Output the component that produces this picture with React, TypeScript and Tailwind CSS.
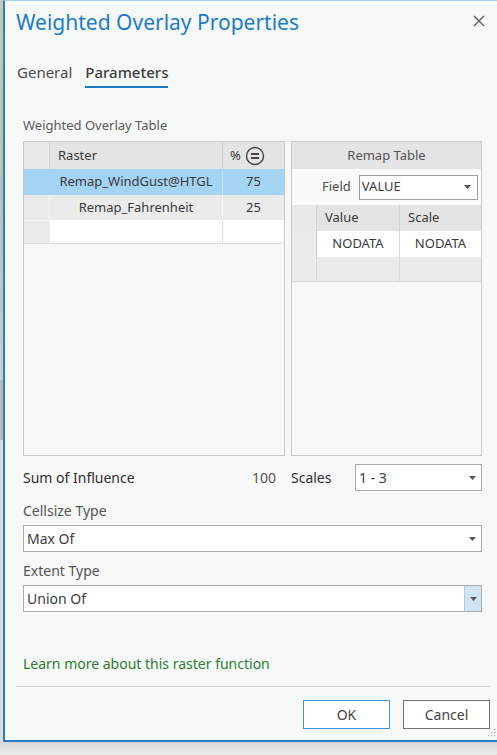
import React from 'react';

function Caret() {
  return (
    <svg width="7" height="4" viewBox="0 0 7 4" className="shrink-0">
      <path d="M0 0 L7 0 L3.5 4 Z" fill="#555" />
    </svg>
  );
}

function Select({ value, active }: { value: string; active?: boolean }) {
  return (
    <div className="flex h-[27px] items-stretch border border-[#ababab] bg-white">
      <div className="flex flex-1 items-center pl-[3px] text-[14px] text-[#3b3b3b]">{value}</div>
      <div
        className={`flex w-[17px] items-center justify-center ${
          active ? 'border-l border-[#a9cde8] bg-[#cfe4f5]' : ''
        }`}
      >
        <Caret />
      </div>
    </div>
  );
}

export default function App() {
  return (
    <div className="flex h-[755px] w-[497px] flex-col overflow-hidden bg-[#e4e5e5] font-['Noto_Sans',sans-serif]">
      <div className="flex h-[742px]">
        <div className="flex w-[3px] flex-col">
          <div className="h-[380px] bg-gradient-to-b from-[#c5cbb7] via-[#b9c1b4] to-[#c9cfc7]" />
          <div className="h-[60px] bg-[#b7bab9]" />
          <div className="flex-1 bg-[#dcdddd]" />
        </div>
        <div className="flex flex-1 flex-col border-b-2 border-l-2 border-t border-b-[#2a7cc6] border-l-[#2a7cc6] border-t-[#a9d2ef] bg-[#f7f8f8]">
          {/* title */}
          <div className="flex h-[40px] items-center justify-between pl-[11px] pr-[8px] pt-[2px]">
            <div className="text-[21px] leading-none text-[#1a7cc9]">Weighted Overlay Properties</div>
            <svg width="12" height="12" viewBox="0 0 12 12" className="mr-[4px] mt-[-2px]">
              <path d="M1 1 L11 11 M11 1 L1 11" stroke="#666" strokeWidth="1.5" />
            </svg>
          </div>

          {/* tabs */}
          <div className="mt-[20px] flex gap-[13px] pl-[12px] text-[15px]">
            <div className="text-[#4c4c4c]">General</div>
            <div className="flex flex-col">
              <div className="font-medium text-[#3d3d3d]">Parameters</div>
              <div className="mt-[2px] h-[2px] bg-[#1a7cc9]" />
            </div>
          </div>

          <div className="flex flex-col pl-[18px] pr-[15px]">
            <div className="mt-[28px] text-[13px] text-[#5a5a5a]">Weighted Overlay Table</div>

            {/* tables */}
            <div className="mt-[6px] flex h-[315px] gap-[6px]">
              {/* left table */}
              <div className="flex w-[262px] flex-col border border-[#cbcbcb] text-[13px] text-[#3a3a3a]">
                <div className="flex h-[27px] bg-[#e4e4e4]">
                  <div className="w-[26px] border-r border-[#d3d3d3] bg-[#e9e9e9]" />
                  <div className="flex flex-1 items-center pl-[8px]">Raster</div>
                  <div className="flex w-[62px] items-center gap-[4px] border-l border-[#d3d3d3] pl-[7px]">
                    <span>%</span>
                    <svg width="20" height="20" viewBox="0 0 20 20">
                      <circle cx="10" cy="10" r="8.5" fill="none" stroke="#444" strokeWidth="1.4" />
                      <path d="M6 8 H14 M6 12 H14" stroke="#444" strokeWidth="1.8" />
                    </svg>
                  </div>
                </div>
                <div className="flex h-[26px] bg-[#a4d3f3]">
                  <div className="w-[26px]" />
                  <div className="flex flex-1 items-center justify-center">Remap_WindGust@HTGL</div>
                  <div className="flex w-[62px] items-center justify-center border-l border-[#c4e1f4]">75</div>
                </div>
                <div className="flex h-[25px] bg-[#ebebeb]">
                  <div className="w-[26px] border-r border-[#f3f3f3]" />
                  <div className="flex flex-1 items-center justify-center">Remap_Fahrenheit</div>
                  <div className="flex w-[62px] items-center justify-center border-l border-[#f7f7f7]">25</div>
                </div>
                <div className="flex h-[24px] border-b border-[#dadada] bg-white">
                  <div className="w-[26px] border-t border-[#f3f3f3] bg-[#ebebeb]" />
                  <div className="flex-1" />
                  <div className="w-[62px] border-l border-[#dadada]" />
                </div>
                <div className="flex-1" />
              </div>

              {/* right table */}
              <div className="flex flex-1 flex-col border border-[#cbcbcb] text-[13px] text-[#3a3a3a]">
                <div className="flex h-[27px] items-center justify-center bg-[#e4e4e4] text-[#555]">Remap Table</div>
                <div className="flex h-[36px] items-center gap-[8px] bg-[#fafafa] pl-[30px] pr-[3px]">
                  <span className="text-[#4a4a4a]">Field</span>
                  <div className="flex h-[25px] flex-1 items-center justify-between border border-[#a0a0a0] bg-white pl-[2px] pr-[6px]">
                    <span>VALUE</span>
                    <Caret />
                  </div>
                </div>
                <div className="flex h-[26px] bg-[#e4e4e4]">
                  <div className="w-[25px] border-r border-[#d3d3d3] bg-[#e9e9e9]" />
                  <div className="flex w-[82px] items-center pl-[8px]">Value</div>
                  <div className="flex flex-1 items-center border-l border-[#d3d3d3] pl-[8px]">Scale</div>
                </div>
                <div className="flex h-[26px] bg-white">
                  <div className="w-[25px] border-r border-[#d3d3d3] bg-[#ebebeb]" />
                  <div className="flex w-[82px] items-center justify-center">NODATA</div>
                  <div className="flex flex-1 items-center justify-center border-l border-[#dadada]">NODATA</div>
                </div>
                <div className="flex h-[25px] border-b border-[#dadada] bg-[#ebebeb]">
                  <div className="w-[25px] border-r border-[#dadada]" />
                  <div className="w-[82px]" />
                  <div className="flex-1 border-l border-[#dadada]" />
                </div>
                <div className="flex-1" />
              </div>
            </div>

            {/* sum + scales */}
            <div className="mt-[8px] flex h-[27px] items-center text-[14px] text-[#2e2e2e]">
              <div className="w-[218px]">Sum of Influence</div>
              <div className="w-[35px] text-right text-[#555]">100</div>
              <div className="w-[79px] pl-[15px]">Scales</div>
              <div className="flex-1">
                <Select value="1 - 3" />
              </div>
            </div>

            <div className="mt-[9px] text-[14px] text-[#555]">Cellsize Type</div>
            <div className="mt-[4px]">
              <Select value="Max Of" />
            </div>

            <div className="mt-[8px] text-[14px] text-[#555]">Extent Type</div>
            <div className="mt-[4px]">
              <Select value="Union Of" active />
            </div>

            <div className="mt-[41px] text-[14px] text-[#2e7d32]">Learn more about this raster function</div>
          </div>

          <div className="ml-[11px] mr-[7px] mt-[12px] h-px bg-[#d2d2d2]" />

          <div className="mt-[13px] flex justify-end gap-[13px] pr-[7px]">
            <button className="flex h-[29px] w-[87px] items-center justify-center border border-[#3f92e0] bg-white text-[14px] text-[#444]">
              OK
            </button>
            <button className="flex h-[29px] w-[87px] items-center justify-center border border-[#6f6f6f] bg-white text-[14px] text-[#444]">
              Cancel
            </button>
          </div>
          <div className="flex justify-end pr-[1px]">
            <svg width="8" height="8" viewBox="0 0 8 8">
              <g fill="#aaa">
                <rect x="6" y="0" width="1.2" height="1.2" />
                <rect x="3" y="3" width="1.2" height="1.2" />
                <rect x="6" y="3" width="1.2" height="1.2" />
                <rect x="0" y="6" width="1.2" height="1.2" />
                <rect x="3" y="6" width="1.2" height="1.2" />
                <rect x="6" y="6" width="1.2" height="1.2" />
              </g>
            </svg>
          </div>
        </div>
      </div>
      <div className="h-[13px] bg-gradient-to-b from-[#d5d6d6] to-[#ececec]" />
    </div>
  );
}
